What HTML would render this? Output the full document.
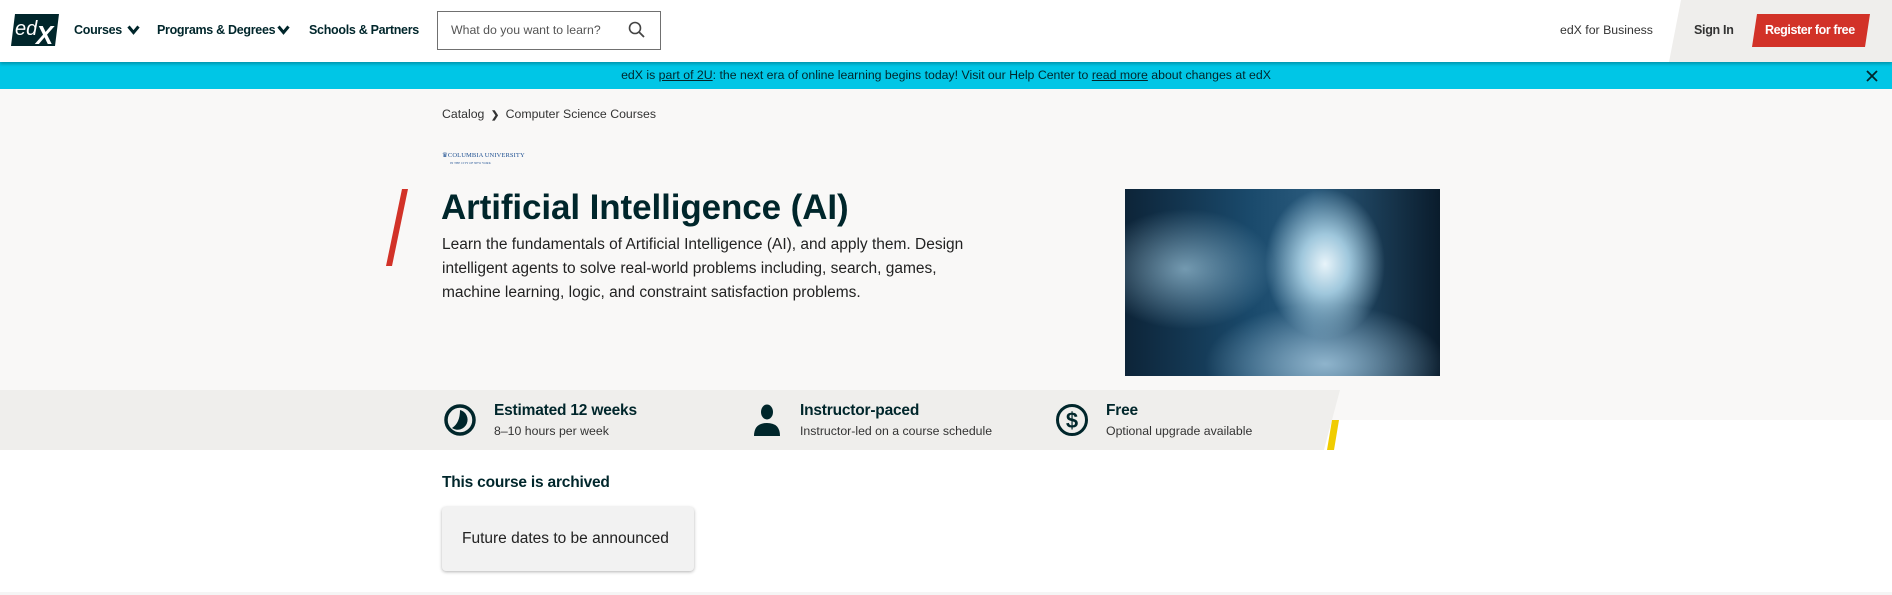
<!DOCTYPE html>
<html><head><meta charset="utf-8"><style>
*{margin:0;padding:0;box-sizing:border-box}
body{width:1892px;height:595px;overflow:hidden;background:#fff;font-family:"Liberation Sans",sans-serif;color:#00262b;position:relative}
.abs{position:absolute}
header{position:absolute;left:0;top:0;width:1892px;height:62px;background:#fff;box-shadow:0 2px 3px rgba(0,0,0,.25);z-index:2}
.nav{font-size:12.5px;font-weight:bold;color:#00262b;top:23px;letter-spacing:-.3px}
.banner{top:62px;left:0;width:1892px;height:27px;background:#00c6e6;font-size:12.3px;text-align:center;line-height:27px;color:#00262b}
.banner u{text-decoration:underline}
.hero{top:89px;left:0;width:1892px;height:331px;background:#f9f8f7}
.stats{top:390px;left:0;width:1340px;height:60px;background:#efeeec;clip-path:polygon(0 0,100% 0,98.8% 100%,0 100%)}
.st{font-size:15.5px;font-weight:bold;letter-spacing:-.2px}
.ss{font-size:12.3px;color:#333}
</style></head><body>
<header>
  <svg class="abs" style="left:11px;top:14px" width="48" height="32" viewBox="0 0 48 32">
    <polygon points="4,0 48,0 44,32 0,32" fill="#00262b"/>
    <text x="4" y="21" font-family="Liberation Sans" font-style="italic" font-size="20" fill="#fff">ed</text>
    <text x="25" y="30" font-family="Liberation Sans" font-style="italic" font-weight="bold" font-size="26" fill="#fff">X</text>
  </svg>
  <div class="abs nav" style="left:74px">Courses</div>
  <svg class="abs" style="left:127px;top:25px" width="13" height="10"><path d="M1.5 1.5 L6.5 7.5 L11.5 1.5" stroke="#00262b" stroke-width="3" fill="none"/></svg>
  <div class="abs nav" style="left:157px">Programs &amp; Degrees</div>
  <svg class="abs" style="left:277px;top:25px" width="13" height="10"><path d="M1.5 1.5 L6.5 7.5 L11.5 1.5" stroke="#00262b" stroke-width="3" fill="none"/></svg>
  <div class="abs nav" style="left:309px">Schools &amp; Partners</div>
  <div class="abs" style="left:437px;top:11px;width:224px;height:39px;border:1px solid #707070;background:#fff"></div>
  <div class="abs" style="left:451px;top:23px;font-size:12.3px;color:#555">What do you want to learn?</div>
  <svg class="abs" style="left:628px;top:21px" width="18" height="18"><circle cx="7" cy="7" r="5.5" stroke="#444" stroke-width="1.6" fill="none"/><path d="M11 11 L16 16" stroke="#444" stroke-width="1.8"/></svg>
  <div class="abs" style="left:1560px;top:23px;font-size:12.3px;color:#333">edX for Business</div>
  <div class="abs" style="left:1669px;top:0;width:223px;height:62px;background:#efeeec;clip-path:polygon(12px 0,100% 0,100% 100%,0 100%)"></div>
  <div class="abs" style="left:1694px;top:23px;font-size:12.5px;font-weight:bold;color:#333;letter-spacing:-.3px">Sign In</div>
  <div class="abs" style="left:1752px;top:14px;width:118px;height:33px;background:#d23228;clip-path:polygon(5px 0,100% 0,calc(100% - 5px) 100%,0 100%)"></div>
  <div class="abs" style="left:1765px;top:23px;font-size:12.5px;font-weight:bold;color:#fff;letter-spacing:-.4px">Register for free</div>
</header>
<div class="abs banner">edX is <u>part of 2U</u>: the next era of online learning begins today! Visit our Help Center to <u>read more</u> about changes at edX</div>
<svg class="abs" style="left:1866px;top:70px" width="12" height="12"><path d="M1 1 L11 11 M11 1 L1 11" stroke="#00262b" stroke-width="1.8"/></svg>
<div class="abs hero"></div>
<div class="abs stats"></div>
<div class="abs" style="left:1327px;top:420px;width:12px;height:30px;background:#f0cc00;clip-path:polygon(5px 0,100% 0,7px 100%,0 100%)"></div>
<div class="abs" style="left:442px;top:107px;font-size:12.3px;color:#333">Catalog <span style="font-size:10px;font-weight:bold;margin:0 3px">&#10095;</span> Computer Science Courses</div>
<div class="abs" style="left:442px;top:151px;font-family:'Liberation Serif',serif;font-size:6.5px;color:#1d4f91;letter-spacing:.1px">♛COLUMBIA UNIVERSITY<br><span style="font-size:3px;margin-left:8px">IN THE CITY OF NEW YORK</span></div>
<div class="abs" style="left:386px;top:189px;width:22px;height:77px;background:#d23228;clip-path:polygon(16px 0,22px 0,6px 100%,0 100%)"></div>
<div class="abs" style="left:441px;top:188px;font-size:35px;font-weight:bold;color:#00262b;letter-spacing:-.1px">Artificial Intelligence (AI)</div>
<div class="abs" style="left:442px;top:233px;width:548px;font-size:15.5px;line-height:24px;color:#222">Learn the fundamentals of Artificial Intelligence (AI), and apply them. Design intelligent agents to solve real-world problems including, search, games, machine learning, logic, and constraint satisfaction problems.</div>
<div class="abs" style="left:1125px;top:189px;width:315px;height:187px;background:
 radial-gradient(ellipse 60px 75px at 200px 75px,#e8f4fa 0%,#9fc7dc 40%,rgba(60,120,160,0) 100%),
 radial-gradient(ellipse 90px 60px at 60px 80px,rgba(180,220,240,.6),rgba(0,0,0,0) 100%),
 radial-gradient(ellipse 120px 60px at 200px 175px,#8fb4cc 0%,rgba(30,70,100,0) 100%),
 linear-gradient(90deg,#0d2438,#1a4a6c 40%,#2a5a7c 60%,#0a1c2c)"></div>
<svg class="abs" style="left:443px;top:403px" width="34" height="34" viewBox="0 0 34 34"><circle cx="17" cy="17" r="14" stroke="#00262b" stroke-width="3.5" fill="none"/><path d="M17 7 A10 10 0 1 1 9 25 Q17 20 17 7Z" fill="#00262b"/></svg>
<div class="abs st" style="left:494px;top:402px">Estimated 12 weeks</div>
<div class="abs ss" style="left:494px;top:424px">8–10 hours per week</div>
<svg class="abs" style="left:752px;top:404px" width="30" height="34" viewBox="0 0 30 34"><ellipse cx="15" cy="8" rx="6" ry="7.5" fill="#00262b"/><path d="M2 32 Q2 19 15 19 Q28 19 28 32Z" fill="#00262b"/></svg>
<div class="abs st" style="left:800px;top:402px">Instructor-paced</div>
<div class="abs ss" style="left:800px;top:424px">Instructor-led on a course schedule</div>
<svg class="abs" style="left:1055px;top:403px" width="34" height="34" viewBox="0 0 34 34"><circle cx="17" cy="17" r="14.5" stroke="#00262b" stroke-width="3" fill="none"/><text x="17" y="25" text-anchor="middle" font-family="Liberation Sans" font-weight="bold" font-size="22" fill="#00262b">$</text></svg>
<div class="abs st" style="left:1106px;top:402px">Free</div>
<div class="abs ss" style="left:1106px;top:424px">Optional upgrade available</div>
<div class="abs" style="left:442px;top:474px;font-size:15.5px;font-weight:bold;letter-spacing:-.2px">This course is archived</div>
<div class="abs" style="left:442px;top:507px;width:252px;height:64px;background:#f2f2f2;border-radius:4px;box-shadow:0 1px 3px rgba(0,0,0,.3)"></div>
<div class="abs" style="left:462px;top:530px;font-size:15.5px;color:#222">Future dates to be announced</div>
<div class="abs" style="left:0;top:592px;width:1892px;height:3px;background:#f5f5f5"></div>
</body></html>
